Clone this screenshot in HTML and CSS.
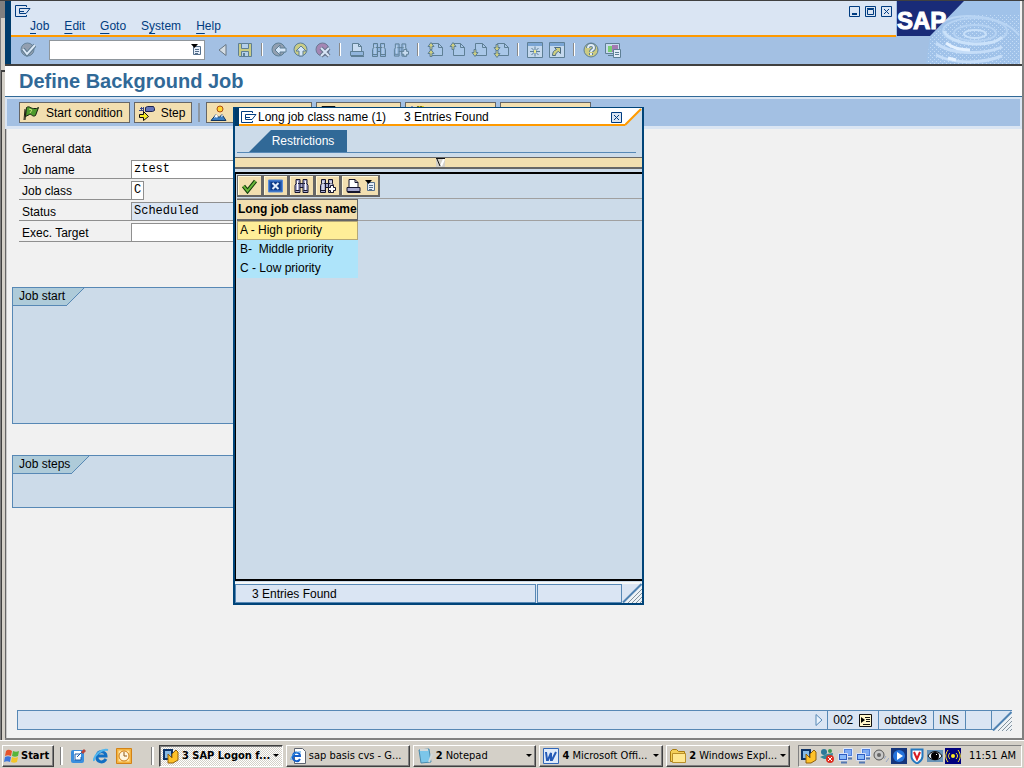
FILE: index.html
```html
<!DOCTYPE html>
<html lang="en">
<head>
    <meta charset="UTF-8">
    <meta name="viewport" content="width=device-width, initial-scale=1.0">
    <title>Define Background Job</title>
    <link rel="stylesheet" href="styles.css">
</head>
<body>
    <svg class="sprite" aria-hidden="true">
        <defs>
            <pattern id="dots" width="4" height="4" patternUnits="userSpaceOnUse">
                <path d="M0 0h1v1H0zM2 2h1v1H2z" fill="#c4dcf6"/>
            </pattern>
        </defs>
        <symbol id="exit" viewBox="0 0 16 12"><path d="M11.500 2V.5H.5v11h11V10M4.500 3.500h10.500l-4 5H4.500zM5 6.500h4" fill="none" stroke="#003c80"/></symbol>
        <symbol id="close" viewBox="0 0 11 11"><path d="M.5.5h10v10H.5z" fill="#dae5f3" stroke="#003c80"/><path d="M3 3l5 5M8 3L3 8" stroke="#003c80" fill="none"/></symbol>
        <symbol id="enter" viewBox="0 0 16 16"><circle cx="7.500" cy="7.500" r="6.500" fill="#929fb0" stroke="#67849b"/><path d="M3 7l4 5 8-9" fill="none" stroke="#5d7a90" stroke-width="4"/><path d="M3 7l4 5 8-9" fill="none" stroke="#dbe9f7" stroke-width="2"/></symbol>
        <symbol id="list" viewBox="0 0 11 12"><path d="M2.500 2.500h7v8h-7z" fill="#e6eefa" stroke="#55708c"/><path d="M4 5.500h4M4 7.500h4M4 9.500h3" stroke="#55708c"/><path d="M0 0h7L3.500 4z"/></symbol>
        <symbol id="save" viewBox="0 0 16 16"><path d="M1.500 1.500h13v13h-12l-1-1z" fill="#c9cc86" stroke="#5e7f95"/><path d="M4.500 1.500h7v5h-7zM4.500 9.500h7v5h-7z" fill="#b5d0ec" stroke="#5e7f95"/><path d="M6 11h2v3H6z" fill="#5e7f95"/></symbol>
        <symbol id="back" viewBox="0 0 16 16"><circle cx="7.500" cy="7.500" r="6.500" fill="#929fb0" stroke="#5e7f95"/><path d="M4 8l5-5v3h6v4H9v3z" fill="#d5e6f8" stroke="#5e7f95"/></symbol>
        <symbol id="up" viewBox="0 0 16 16"><circle cx="7.500" cy="7.500" r="6.500" fill="#c9cc86" stroke="#5e7f95"/><path d="M8 4l5 5h-3v5H6V9H3z" fill="#d5e6f8" stroke="#5e7f95"/></symbol>
        <symbol id="cancel" viewBox="0 0 16 16"><circle cx="7.500" cy="7.500" r="6.500" fill="#a486b4" stroke="#6d7893"/><path d="M6 6l8 8M14 6l-8 8" stroke="#66758d" stroke-width="4"/><path d="M6 6l8 8M14 6l-8 8" stroke="#d9e6f7" stroke-width="2"/></symbol>
        <symbol id="print" viewBox="0 0 16 16"><path d="M3.500 9.500v-8h6l3 3v5z" fill="var(--paper)" stroke="currentColor"/><path d="M9.500 1.500v3h3" fill="none" stroke="currentColor"/><path d="M1.500 9.500h13v4h-13z" fill="var(--fill)" stroke="currentColor"/><path d="M2 14.500h13" stroke="currentColor"/></symbol>
        <symbol id="find" viewBox="0 0 16 16"><path d="M2.500 1.500h4v4h3v-4h4v4l1 2v7h-5v-5h-3v5h-5v-7l1-2z" fill="var(--fill)" stroke="currentColor"/><path d="M6.500 5v5M9.500 5v5M3 5.500h3M10 5.500h3M2 12.500h4M10 12.500h4" stroke="currentColor"/><path d="M4 3v9M12 3v9" stroke="var(--paper)"/></symbol>
        <symbol id="find-next" viewBox="0 0 17 16"><path d="M2.500 1.500h4v4h3v-4h4v4l1 2v7h-5v-5h-3v5h-5v-7l1-2z" fill="var(--fill)" stroke="currentColor"/><path d="M6.500 5v5M9.500 5v5M3 5.500h3M10 5.500h3M2 12.500h4" stroke="currentColor"/><path d="M4 3v9M12 3v4" stroke="var(--paper)"/><path d="M9.500 9.500h2v-2h3v2h2v3h-2v2h-3v-2h-2z" fill="var(--paper)" stroke="currentColor"/></symbol>
        <symbol id="page" viewBox="0 0 16 16"><path d="M4.500 1.500h7l4 4v8h-11z" fill="#a9c7e8" stroke="#5e7f95"/><path d="M11.500 1.500v4h4" fill="none" stroke="#5e7f95"/></symbol>
        <symbol id="arrow" viewBox="0 0 8 8"><path d="M4 .5l3 4H5v3H3v-3H1z" fill="#cfcf80" stroke="#5e7f95"/></symbol>
        <symbol id="session" viewBox="0 0 16 16"><path d="M.5.5h15v15H.5z" fill="#c5d9ee" stroke="#5e7f95"/><path d="M1 1h14v3H1z" fill="#7aa5d4"/><path d="M8 4.500v10M3 9.500h10M4.500 6l7 7M11.500 6l-7 7" stroke="#5e7f95"/><path d="M7 8h2v3H7z" fill="#ecea8c"/></symbol>
        <symbol id="shortcut" viewBox="0 0 16 16"><path d="M.5.5h15v15H.5z" fill="#c5d9ee" stroke="#5e7f95"/><path d="M1 1h14v3H1z" fill="#7aa5d4"/><path d="M5.500 5.500h6v6l-2-2c-2 1-3 2-3 4h-3c0-3 1-5 4-6z" fill="#cfcf80" stroke="#4e6c80"/></symbol>
        <symbol id="help" viewBox="0 0 16 16"><circle cx="8" cy="8" r="7" fill="#cccb82" stroke="#5e7f95"/><path d="M5 6c0-4 6-4 6 0 0 2-3 2-3 4M8 11v2" fill="none" stroke="#5e7f95" stroke-width="4"/><path d="M5 6c0-4 6-4 6 0 0 2-3 2-3 4M8 11v2" fill="none" stroke="#e3edf7" stroke-width="2"/></symbol>
        <symbol id="layout" viewBox="0 0 16 16"><path d="M.5 1.500h14v10H.5zM3 13.500h6" fill="#c8daee" stroke="#5e7f95"/><path d="M3 4h4v6H3z" fill="#7bcf74"/><path d="M7 3h6v7H7z" fill="#a47ab3"/><path d="M8.500 7.500h7v8h-7z" fill="#e2edf9" stroke="#5e7f95"/><path d="M10 10.500h4M10 12.500h4" stroke="#5e7f95"/></symbol>
        <symbol id="flag" viewBox="0 0 17 16"><path d="M2 4L1 15M3 5L2 15" stroke="#221" fill="none"/><path d="M3.500 2.500c3-2 4 1 7 1h3l2-1-3 8c-3 2-4-2-6-1l-4 2z" fill="#4f9b2c" stroke="#161e10"/><path d="M6 4l3 1-2 3" fill="none" stroke="#c8e07a"/></symbol>
        <symbol id="step" viewBox="0 0 17 16"><path d="M7.500 2.500l2-1h6l1 2v2l-2 1h-7z" fill="#6474b8" stroke="#1c2450"/><path d="M3.500 2v4M5.500 2v5M2 3.500h3M1 5.500h4" stroke="#394787"/><path d="M1.500 9.500h4v-3l5 5-5 4v-3h-4z" fill="#f7ec25" stroke="#111"/></symbol>
        <symbol id="overview" viewBox="0 0 16 16"><circle cx="9.500" cy="4" r="3" fill="#ffd832" stroke="#b04a10"/><path d="M.5 15.500l5-6 3 3 3-3 4 6z" fill="#3a7fc4" stroke="#103560"/><path d="M5.500 9l-2 4 2-1 1 1 1-2zM11.500 9l-1 3 2-1z" fill="#fff"/></symbol>
        <symbol id="ok" viewBox="0 0 16 16"><path d="M2 8l4 5 8-10" fill="none" stroke="#123d0b" stroke-width="4"/><path d="M2 8l4 5 8-10" fill="none" stroke="#69b73b" stroke-width="2"/></symbol>
        <symbol id="no" viewBox="0 0 16 16"><path d="M1 2h14v12H1z" fill="#2b62b8" stroke="#5b8ed8"/><path d="M3 4h10v8H3z" fill="#0c3a86"/><path d="M5 5l6 6M11 5l-6 6" stroke="#e4eefb" stroke-width="2"/></symbol>
        <symbol id="grip" viewBox="0 0 20 20"><path d="M0 20L20 0v20z" fill="#edf2f6"/><path d="M1 19.500L19.500 1" stroke="#4f82b2" stroke-width="2"/><path d="M6 20L20 6M10 20L20 10M14 20l6-6M18 20l2-2" stroke="#83929d"/></symbol>
        <symbol id="sap-logon" viewBox="0 0 16 16"><path d="M0 1h10v11H0z" fill="#0c3367"/><path d="M2 3h6v7H2z" fill="#88bae5"/><path d="M5 6l4 4V6l4-4 2 2v8l-5 3H5z" fill="#ffc229" stroke="#90600a"/></symbol>
        <symbol id="ie" viewBox="0 0 16 16"><path d="M13 11c-3 5-10 3-9-3s9-5 9 0H4" fill="none" stroke="#126fc3" stroke-width="3"/><path d="M1 13C0 8 9 0 15 2" fill="none" stroke="#52b6ee" stroke-width="2"/></symbol>
        <symbol id="ie-page" viewBox="0 0 16 16"><path d="M4.500.5h8l3 3v12h-11z" fill="#fff" stroke="#5e6470"/><path d="M10 11c-2 4-8 2-7-3s7-4 7 0H3" fill="none" stroke="#135fcb" stroke-width="2"/><path d="M1 12C0 8 7 3 11 4" fill="none" stroke="#45a2e8"/></symbol>
        <symbol id="network" viewBox="0 0 16 16"><path d="M6.500.5h9v8h-9z" fill="#4f7fdc" stroke="#dfe9fb"/><path d="M8 2h6v5H8z" fill="#7fabf3"/><path d="M1.500 5.500h9v7h-9z" fill="#2f5dc0" stroke="#d8e3fa"/><path d="M3 7h6v4H3z" fill="#8abafa"/><path d="M4 14.500h6M11 10.500h4" stroke="#5579b3" stroke-width="2"/></symbol>
    </svg>

    <div class="desktop">
        <div class="behind" aria-hidden="true"></div>
        <div class="window">
            <header class="header">
                <div class="menubar">
                    <svg class="exit-icon"><use href="#exit"/></svg>
                    <nav class="menu">
                        <a href="#"><u>J</u>ob</a>
                        <a href="#"><u>E</u>dit</a>
                        <a href="#"><u>G</u>oto</a>
                        <a href="#">S<u>y</u>stem</a>
                        <a href="#"><u>H</u>elp</a>
                    </nav>
                    <div class="window-buttons">
                        <button type="button" aria-label="Minimize"><svg viewBox="0 0 11 11"><path d="M.5.5h10v10H.5z" fill="#dae5f3" stroke="#003c80"/><path d="M3 7h5v2H3z" fill="#003c80"/></svg></button>
                        <button type="button" aria-label="Maximize"><svg viewBox="0 0 11 11"><path d="M.5.5h10v10H.5z" fill="#dae5f3" stroke="#003c80"/><path d="M2.500 3.500h6v5h-6zM2 2.500h7" fill="none" stroke="#003c80"/></svg></button>
                        <button type="button" aria-label="Close"><svg><use href="#close"/></svg></button>
                    </div>
                </div>
                <div class="toolbar">
                    <button type="button" class="icon enter" aria-label="Enter"><svg><use href="#enter"/></svg></button>
                    <div class="command">
                        <input type="text" aria-label="Command">
                        <button type="button" aria-label="Command history"><svg><use href="#list"/></svg></button>
                    </div>
                    <button type="button" class="icon narrow" aria-label="Hide command field"><svg viewBox="0 0 9 12"><path d="M8 .5v11L1 6z" fill="#d5dde3" stroke="#667582"/></svg></button>
                    <button type="button" class="icon" aria-label="Save"><svg><use href="#save"/></svg></button>
                    <span class="sep"></span>
                    <button type="button" class="icon" aria-label="Back"><svg><use href="#back"/></svg></button>
                    <button type="button" class="icon" aria-label="Exit"><svg><use href="#up"/></svg></button>
                    <button type="button" class="icon" aria-label="Cancel"><svg><use href="#cancel"/></svg></button>
                    <span class="sep"></span>
                    <button type="button" class="icon" aria-label="Print"><svg><use href="#print"/></svg></button>
                    <button type="button" class="icon" aria-label="Find"><svg><use href="#find"/></svg></button>
                    <button type="button" class="icon" aria-label="Find next"><svg><use href="#find-next"/></svg></button>
                    <span class="sep"></span>
                    <button type="button" class="icon" aria-label="First page"><svg viewBox="0 0 16 16"><use href="#page" width="16" height="16"/><use href="#arrow" width="8" height="8"/><use href="#arrow" y="7" width="8" height="8"/></svg></button>
                    <button type="button" class="icon" aria-label="Previous page"><svg viewBox="0 0 16 16"><use href="#page" width="16" height="16"/><use href="#arrow" width="8" height="8"/></svg></button>
                    <button type="button" class="icon" aria-label="Next page"><svg viewBox="0 0 16 16"><use href="#page" width="16" height="16"/><use href="#arrow" width="8" height="8" transform="translate(0 15) scale(1 -1)"/></svg></button>
                    <button type="button" class="icon" aria-label="Last page"><svg viewBox="0 0 16 16"><use href="#page" width="16" height="16"/><use href="#arrow" width="8" height="8" transform="translate(0 10) scale(1 -1)"/><use href="#arrow" width="8" height="8" transform="translate(0 16) scale(1 -1)"/></svg></button>
                    <span class="sep"></span>
                    <button type="button" class="icon" aria-label="New session"><svg><use href="#session"/></svg></button>
                    <button type="button" class="icon" aria-label="Create shortcut"><svg><use href="#shortcut"/></svg></button>
                    <span class="sep"></span>
                    <button type="button" class="icon" aria-label="Help"><svg><use href="#help"/></svg></button>
                    <button type="button" class="icon" aria-label="Customize layout"><svg><use href="#layout"/></svg></button>
                </div>
                <svg class="banner" viewBox="0 0 124 63">
                    <path d="M68 0h56v63H30l4-28z" fill="#a0c2e9"/>
                    <path d="M68 14h56v49H31l3-28z" fill="url(#dots)"/>
                    <g fill="none">
                        <ellipse cx="79" cy="33" rx="11" ry="4" stroke="#c8e0f9" stroke-width="2"/>
                        <ellipse cx="79" cy="32" rx="21" ry="8" stroke="#b6d3f3" stroke-width="2"/>
                        <ellipse cx="79" cy="30" rx="32" ry="13" stroke="#b6d3f3" stroke-width="2"/>
                        <path d="M48 30c6 14 46 18 58 6" stroke="#cbe2fa" stroke-width="3"/>
                        <path d="M40 42c14 12 48 12 66 4" stroke="#c5ddf8" stroke-width="3"/>
                        <path d="M45 22c19-13 62-7 78 12" stroke="#b9d5f4" stroke-width="2"/>
                        <path d="M40 54c18 9 45 9 66 1" stroke="#c5ddf8" stroke-width="3"/>
                        <path d="M50 42c8 6 16 7 24 7M52 57l8 2" stroke="#e4f1ff" stroke-width="3"/>
                    </g>
                    <path d="M1 0h67L34 35H1z" fill="#192b78"/>
                    <text class="logo-text" x="1" y="28">SAP</text>
                </svg>
            </header>

            <h1>Define Background Job</h1>

            <div class="app-toolbar">
                <button type="button"><svg><use href="#flag"/></svg>Start condition</button>
                <button type="button"><svg><use href="#step"/></svg>Step</button>
                <span class="app-sep"></span>
                <button type="button" class="w-selection" aria-label="Job selection"><svg><use href="#overview"/></svg></button>
                <button type="button" class="w-own" aria-label="Own jobs"><svg viewBox="0 0 16 16"><path d="M1.500 1.500h13v13h-13z" fill="#fff" stroke="#111"/></svg></button>
                <button type="button" class="w-wizard" aria-label="Job wizard"><svg viewBox="0 0 16 16"><path d="M1 3l2-2M3 4l2-2" stroke="#1c48b8"/><path d="M6 3l2-2h6l2 3v10H6z" fill="#dcc916"/><path d="M8.500 1v4M11.500 1v4" stroke="#111"/></svg></button>
                <button type="button" class="w-standard" aria-label="Standard job"></button>
            </div>

            <main class="content">
                <form class="general">
                    <h2>General data</h2>
                    <div class="row"><label for="jobName">Job name</label><input type="text" id="jobName" value="ztest"></div>
                    <div class="row"><label for="jobClass">Job class</label><input type="text" id="jobClass" class="one-char" value="C"></div>
                    <div class="row"><label for="status">Status</label><input type="text" id="status" class="readonly" value="Scheduled" readonly></div>
                    <div class="row"><label for="target">Exec. Target</label><input type="text" id="target"></div>
                </form>
                <section class="group job-start">
                    <h2>Job start</h2>
                    <svg viewBox="0 0 18 17"><path d="M0 0h17.500L.5 17H0z" fill="#aecbd9"/><path d="M17 0L0 17" stroke="#5788b5"/></svg>
                </section>
                <section class="group job-steps">
                    <h2>Job steps</h2>
                    <svg viewBox="0 0 18 17"><path d="M0 0h17.500L.5 17H0z" fill="#aecbd9"/><path d="M17 0L0 17" stroke="#5788b5"/></svg>
                </section>
            </main>

            <footer class="status">
                <span class="message"><svg viewBox="0 0 8 12"><path d="M1 .5v11L7 6z" fill="#e9f3fd" stroke="#5788b5"/></svg></span>
                <span>002<svg class="server-icon" viewBox="0 0 13 13"><path d="M.5.5h12v12H.5z" fill="#fff6ca" stroke="#111"/><path d="M2 3l4 3-4 3z"/><path d="M6 3.500h5M7 5.500h4M7 7.500h4M4 10.500h7" stroke="#111"/></svg></span>
                <span>obtdev3</span>
                <span>INS</span>
                <span class="blank"></span>
                <svg class="grip"><use href="#grip"/></svg>
            </footer>
        </div>

        <div class="popup" role="dialog" aria-labelledby="popupTitle">
            <div class="popup-head">
                <svg class="exit-icon"><use href="#exit"/></svg>
                <span id="popupTitle">Long job class name (1)</span>
                <span class="count">3 Entries Found</span>
                <button type="button" aria-label="Close list"><svg><use href="#close"/></svg></button>
                <svg class="corner" viewBox="0 0 17 18"><path d="M0 0h17L0 17z" fill="#fff"/><path d="M0 17L16 1" stroke="#ff9a00" stroke-width="2"/></svg>
            </div>
            <div class="tabs"><button type="button">Restrictions</button></div>
            <button type="button" class="splitter" aria-label="Expand restrictions"><svg viewBox="0 0 9 9"><path d="M0 0h9v9H0z" fill="#d4d0c8"/><path d="M8 1L5 8" stroke="#fff" stroke-width="2"/><path d="M0 .5h9M1 1l3 7" stroke="#111" fill="none"/></svg></button>
            <div class="hits">
                <div class="hit-tools">
                    <button type="button" aria-label="Copy"><svg><use href="#ok"/></svg></button>
                    <button type="button" aria-label="Cancel list"><svg><use href="#no"/></svg></button>
                    <button type="button" aria-label="Search"><svg><use href="#find"/></svg></button>
                    <button type="button" aria-label="Search next"><svg><use href="#find-next"/></svg></button>
                    <button type="button" class="print" aria-label="Print list"><svg><use href="#print"/></svg><svg class="small"><use href="#list"/></svg></button>
                </div>
                <table>
                    <thead>
                        <tr><th>Long job class name</th><td></td></tr>
                    </thead>
                    <tbody>
                        <tr class="selected"><td>A - High priority</td></tr>
                        <tr><td>B-&nbsp; Middle priority</td></tr>
                        <tr><td>C - Low priority</td></tr>
                    </tbody>
                </table>
            </div>
            <div class="popup-status">
                <span class="found">3 Entries Found</span>
                <span class="blank"></span>
                <svg class="grip"><use href="#grip"/></svg>
            </div>
        </div>
    </div>

    <div class="taskbar">
        <button type="button" class="start">
            <svg viewBox="0 0 16 16"><path d="M2 3c2-2 4-1 6 0L7 8C5 7 3 7 1 8z" fill="#e6532b"/><path d="M9 3c2 1 4 1 6 0l-1 5c-2 1-4 1-6 0z" fill="#58b53b"/><path d="M1 9c2-1 4-1 6 0l-1 5c-2-1-4-1-6 0z" fill="#3d75dc"/><path d="M8 9c2 1 4 1 6 0l-1 5c-2 1-4 1-6 0z" fill="#f4c528"/></svg>Start
        </button>
        <div class="quick">
            <button type="button" aria-label="Show desktop"><svg viewBox="0 0 16 16"><rect x="1" y="2" width="13" height="13" rx="2" fill="#3a8ede"/><path d="M4 3h7v9H4z" fill="#fff"/><path d="M10 6H5v6h6V9M7 9l6-6" fill="none" stroke="#1d5ba8"/><path d="M11 4l3-3 2 2-3 3z" fill="#b8443a"/></svg></button>
            <button type="button" aria-label="Internet Explorer"><svg><use href="#ie"/></svg></button>
            <button type="button" aria-label="Outlook"><svg viewBox="0 0 16 16"><path d="M.5.5h15v15H.5z" fill="#f4b33f" stroke="#d28216"/><path d="M2.500 2.500h11v11h-11z" fill="#ffe3a1"/><circle cx="8" cy="8" r="5" fill="#fff6e0" stroke="#cb7a13"/><path d="M8 4v4h3" fill="none" stroke="#8f5b19"/></svg></button>
        </div>
        <div class="tasks">
            <button type="button" class="pressed arrow"><svg><use href="#sap-logon"/></svg><span><b>3 SAP Logon f...</b></span></button>
            <button type="button"><svg><use href="#ie-page"/></svg><span>sap basis cvs - G...</span></button>
            <button type="button" class="arrow"><svg viewBox="0 0 16 16"><path d="M2 2l10-1 2 13-10 1z" fill="#7cc6e9" stroke="#4a8bad"/><path d="M3 2h8M12 14l3-8" stroke="#d2d9db" stroke-width="2"/></svg><span><b>2</b> Notepad</span></button>
            <button type="button" class="arrow"><svg viewBox="0 0 16 16"><path d="M.5.5h15v15H.5z" fill="#dfeafa" stroke="#3266b7"/><path d="M3 4l1 8h1l3-7v7h1l4-8" fill="none" stroke="#2459b6" stroke-width="2"/></svg><span><b>4</b> Microsoft Offi...</span></button>
            <button type="button" class="arrow"><svg viewBox="0 0 16 16"><path d="M.5 13.500v-10l2-2h4l2 2h6v10z" fill="#f4cf59" stroke="#a87c13"/><path d="M2.500 14.500v-9h13v9z" fill="#ffe790" stroke="#b98f29"/></svg><span><b>2</b> Windows Expl...</span></button>
        </div>
        <div class="tray">
            <svg><use href="#sap-logon"/></svg>
            <svg viewBox="0 0 16 16"><circle cx="5" cy="4" r="3" fill="#2c7799"/><circle cx="11" cy="3" r="2" fill="#3b9753"/><path d="M1 9l7-3 6-1-1 6H5z" fill="#35889b"/><circle cx="11" cy="11" r="4" fill="#de2d20"/><path d="M9 9l4 4M13 9l-4 4" stroke="#fff"/></svg>
            <svg><use href="#network"/></svg>
            <svg><use href="#network"/></svg>
            <svg viewBox="0 0 16 16"><circle cx="6" cy="7" r="5" fill="#c8c8c8" stroke="#555"/><circle cx="6" cy="7" r="2" fill="#666"/><path d="M11 11l2-3M13 14l3-4" stroke="#96a6c6"/></svg>
            <svg viewBox="0 0 16 16"><path d="M0 0h16v16H0z" fill="#15357b"/><circle cx="8" cy="8" r="6" fill="#2674dc"/><path d="M6 4l6 4-6 4z" fill="#fff"/></svg>
            <svg viewBox="0 0 16 16"><path d="M2.500 1.500h11v7c0 4-3 5-5.500 7-3-2-5.500-3-5.500-7z" fill="#fff" stroke="#2477be" stroke-width="2"/><path d="M5 4l3 7 3-7" fill="none" stroke="#d71d23" stroke-width="2"/></svg>
            <svg viewBox="0 0 16 16"><path d="M0 2h16v12H0z" fill="#6793b7"/><path d="M1 8c3-6 11-6 14 0-3 5-11 5-14 0z" fill="#e5eef4" stroke="#111"/><circle cx="8" cy="8" r="4"/><path d="M9 6h1v1H9z" fill="#fff"/></svg>
            <svg viewBox="0 0 16 16"><path d="M0 0h16v16H0z" fill="#00007d"/><path d="M5 5c-2 2-2 4 0 6M11 5c2 2 2 4 0 6M3 2c-3 4-3 8 0 12M13 2c3 4 3 8 0 12" fill="none" stroke="#ffec20"/><circle cx="8" cy="8" r="2" fill="#ffec20"/></svg>
            <time>11:51 AM</time>
        </div>
    </div>
</body>
</html>
```

FILE: styles.css
```css
* {
    box-sizing: border-box;
}
body {
    margin: 0;
    min-height: 100vh;
    display: flex;
    flex-direction: column;
    font-family: "Liberation Sans", Arial, sans-serif;
    font-size: 12px;
    line-height: 16px;
    color: #000;
    background-color: #d4d0c8;
}
button, input {
    margin: 0;
    padding: 0;
    border: 0;
    border-radius: 0;
    font: inherit;
    color: inherit;
    background: none;
}
svg {
    display: block;
    flex: none;
}
h1, h2 {
    margin: 0;
}
.sprite {
    position: absolute;
    width: 0;
    height: 0;
}
.desktop {
    position: relative;
    flex: 1;
    display: flex;
    border-top: 1px solid #404040;
}
.behind {
    width: 5px;
    border-left: 1px solid #808080;
    background: linear-gradient(#808080 17px, #d4d0c8 17px, #d4d0c8 69px, #404040 69px, #404040 71px, transparent 71px),
        linear-gradient(90deg, #404040 1px, #d4d0c8 1px);
}
.window {
    flex: 1;
    display: flex;
    flex-direction: column;
    border-right: 2px solid #808080;
    border-bottom: 2px solid #808080;
    background-color: #f1f1f1;
    box-shadow: inset 1px 0 #666, inset 2px 0 #c8c8c8;
}

/* menu and system toolbar */
.header {
    display: grid;
    grid-template-columns: 1fr 124px;
    grid-template-rows: 36px 27px;
    margin-right: 2px;
    border-left: 6px solid #003c6b;
    background-color: #a3c0e3;
}
.menubar {
    display: grid;
    grid-template-columns: 1fr auto;
    padding: 4px 4px 0 4px;
    border-bottom: 2px solid #ff9a00;
    background-color: #dae5f3;
    color: #003c80;
}
.exit-icon {
    width: 16px;
    height: 12px;
}
.menu {
    grid-row: 2;
    display: flex;
    gap: 15px;
    padding-left: 15px;
}
.menu a {
    color: inherit;
    text-decoration: none;
}
.menu u {
    text-underline-offset: 3px;
}
.window-buttons {
    grid-column: 2;
    grid-row: 1 / 3;
    display: flex;
    align-items: flex-start;
    gap: 5px;
    padding-top: 1px;
}
.window-buttons svg {
    width: 11px;
    height: 11px;
}
.banner {
    grid-column: 2;
    grid-row: 1 / 3;
    width: 124px;
    height: 63px;
}
.logo-text {
    font-size: 24px;
    font-weight: bold;
    fill: #fff;
    stroke: #fff;
    stroke-width: 1px;
}
.toolbar {
    grid-column: 1;
    display: flex;
    align-items: center;
    gap: 6px;
    padding: 0 0 2px 9px;
    --fill: #91b5dd;
    --paper: #c8dcf1;
    color: #5e7f95;
}
.icon svg {
    width: 16px;
    height: 16px;
}
.icon.narrow svg {
    width: 9px;
    height: 12px;
}
.enter {
    margin-right: 7px;
}
.command {
    display: flex;
    align-items: center;
    width: 156px;
    height: 20px;
    margin-right: 7px;
    border: 1px solid #8f969c;
    background-color: #fff;
}
.command input {
    flex: 1;
    min-width: 0;
    height: 18px;
    padding: 0 3px;
}
.command svg {
    width: 11px;
    height: 12px;
    margin-right: 2px;
}
.narrow {
    margin-right: 4px;
}
.sep {
    width: 2px;
    height: 13px;
    margin: 0 2px;
    border-left: 1px solid #8a8a8a;
    background-color: #fff;
}

h1 {
    height: 33px;
    padding-left: 14px;
    border-top: 2px solid #404040;
    border-bottom: 1px solid #316997;
    font-size: 20px;
    line-height: 30px;
    color: #316997;
    background-color: #fff;
}
.app-toolbar {
    display: flex;
    align-items: center;
    gap: 4px;
    height: 32px;
    padding: 0 12px;
    border: 2px solid #dae5f3;
    border-bottom-width: 3px;
    background-color: #a3c0e3;
}
.app-toolbar button {
    display: flex;
    align-items: center;
    gap: 6px;
    height: 21px;
    padding: 0 6px 0 3px;
    border: 1px solid #666;
    background-color: #f2dfb0;
}
.app-toolbar svg {
    width: 17px;
    height: 16px;
}
.app-sep {
    width: 2px;
    height: 19px;
    margin: 0 2px;
    background-color: #8c97a3;
}
.w-selection {
    width: 106px;
}
.w-own {
    width: 85px;
}
.w-wizard, .w-standard {
    width: 91px;
}

/* job form */
.content {
    flex: 1;
    padding: 11px 7px;
}
.content h2 {
    font-size: 12px;
    font-weight: normal;
}
.general {
    width: 50%;
    margin-left: 7px;
}
.general h2 {
    padding-left: 3px;
    line-height: 18px;
}
.row {
    display: flex;
    align-items: flex-end;
    height: 21px;
}
.row label {
    width: 112px;
    height: 18px;
    padding-left: 3px;
    border-bottom: 1px solid #8f8f8f;
    line-height: 18px;
}
.row input {
    flex: 1;
    height: 19px;
    padding: 0 2px 2px;
    border: 1px solid #8f8f8f;
    font-family: "Liberation Mono", "Courier New", monospace;
    background-color: #fff;
}
.row .one-char {
    flex: none;
    width: 13px;
    padding-right: 0;
}
.row .readonly {
    background-color: #dae5f3;
}
.group {
    display: flex;
    align-items: flex-start;
    width: 60%;
    border: 1px solid #5788b5;
    background-color: #ccdbe9;
}
.group h2 {
    height: 18px;
    padding: 0 2px 0 6px;
    border-bottom: 1px solid #5788b5;
    background-color: #aecbd9;
}
.group svg {
    width: 18px;
    height: 17px;
}
.job-start {
    height: 137px;
    margin-top: 45px;
}
.job-steps {
    height: 53px;
    margin-top: 31px;
}
.status {
    display: flex;
    height: 20px;
    margin: 0 10px 8px 12px;
    border: 1px solid #5788b5;
    border-right: 0;
    line-height: 19px;
    background-color: #dae5f3;
}
.status span {
    display: flex;
    align-items: center;
    gap: 6px;
    padding: 0 6px 0 5px;
    border-right: 1px solid #5788b5;
}
.status .message {
    flex: 1;
    justify-content: flex-end;
    padding-right: 4px;
}
.message svg {
    width: 8px;
    height: 12px;
}
.server-icon {
    width: 13px;
    height: 13px;
}
.status .blank {
    width: 26px;
}
.grip {
    width: 20px;
    height: 20px;
}

/* value list window */
.popup {
    position: absolute;
    left: 233px;
    top: 106px;
    width: 411px;
    height: 498px;
    display: flex;
    flex-direction: column;
    border: 2px solid #004479;
    border-top-width: 1px;
    background-color: #ccdbe9;
}
.popup-head {
    display: flex;
    align-items: center;
    height: 18px;
    padding-left: 2px;
    border-left: 4px solid #003c6b;
    background: linear-gradient(#ff9a00, #ff9a00) 0 100% / calc(100% - 17px) 2px no-repeat,
        linear-gradient(#fff, #fff) 0 0 / calc(100% - 17px) 100% no-repeat;
}
.popup-head span {
    padding-left: 1px;
}
.popup-head .count {
    flex: 1;
    padding-left: 18px;
}
.popup-head button svg {
    width: 11px;
    height: 11px;
    margin-right: 3px;
}
.corner {
    width: 17px;
    height: 18px;
}
.tabs {
    height: 27px;
    margin: 0 6px 0 2px;
    padding: 4px 0 0 12px;
    border-bottom: 1px solid #5788b5;
}
.tabs button {
    display: block;
    width: 98px;
    height: 22px;
    padding-left: 10px;
    color: #fff;
    background-color: #316997;
    clip-path: polygon(22px 0, 100% 0, 100% 100%, 0 100%);
}
.splitter {
    display: flex;
    justify-content: center;
    height: 12px;
    margin-top: 4px;
    padding-left: 4px;
    border-top: 1px solid #666;
    border-bottom: 2px solid #666;
    background-color: #f2dfb0;
}
.splitter svg {
    width: 9px;
    height: 9px;
}
.hits {
    flex: 1;
    margin-top: 3px;
    padding-left: 1px;
    border: 1px solid #000;
    border-width: 2px 0 2px 1px;
}
.hit-tools {
    display: flex;
    height: 25px;
    padding-top: 1px;
    border-bottom: 1px solid #a0a0a0;
    --fill: #a7a9d0;
    --paper: #fff;
    color: #15152d;
}
.hit-tools button {
    display: flex;
    align-items: center;
    justify-content: center;
    width: 26px;
    height: 22px;
    border: 2px solid #666;
    border-width: 1px 2px 2px 1px;
    background-color: #f2dfb0;
    box-shadow: inset 1px 1px #fff7d6;
}
.hit-tools svg {
    width: 17px;
    height: 16px;
}
.hit-tools .print {
    width: 39px;
    gap: 3px;
}
.hit-tools .small {
    width: 11px;
    height: 12px;
}
.hits table {
    width: 100%;
    border-spacing: 0;
}
.hits th, .hits td {
    height: 19px;
    padding: 0 0 0 3px;
    border: 0;
    line-height: 17px;
    text-align: left;
    white-space: nowrap;
}
.hits thead td {
    width: 100%;
    border-bottom: 1px solid #a0a0a0;
}
.hits thead th {
    height: 22px;
    padding: 0 0 0 1px;
    border: 1px solid #666;
    border-width: 1px 1px 2px 0;
    background-color: #f2dfb0;
}
.hits tbody td {
    background-color: #aee4fa;
}
.hits .selected td {
    padding-left: 2px;
    border: 1px solid #b5a878;
    background-color: #ffee98;
}
.popup-status {
    display: flex;
    align-items: flex-end;
    height: 21px;
    margin-top: 1px;
    border-top: 2px solid #f5f8f8;
    background-color: #dae5f3;
}
.popup-status span {
    height: 19px;
    border: 1px solid #5788b5;
}
.popup-status .found {
    flex: 1;
    margin-right: 1px;
    padding-left: 16px;
    line-height: 18px;
}
.popup-status .blank {
    width: 85px;
}

/* desktop taskbar */
.taskbar {
    display: flex;
    align-items: center;
    height: 28px;
    padding: 3px 2px 1px;
    border-top: 1px solid #fff;
    font-family: "DejaVu Sans Condensed", "Noto Sans", sans-serif;
    font-size: 11px;
    background-color: #d4d0c8;
}
.start, .tasks button {
    display: flex;
    align-items: center;
    gap: 3px;
    height: 22px;
    padding: 0 3px;
    border: 1px solid;
    border-color: #fff #404040 #404040 #fff;
    box-shadow: inset -1px -1px #808080;
}
.start {
    width: 52px;
    padding: 0 1px;
    gap: 1px;
    font-weight: bold;
}
.taskbar svg {
    width: 16px;
    height: 16px;
}
.quick {
    display: flex;
    gap: 7px;
    height: 18px;
    align-items: center;
    width: 93px;
    margin-left: 7px;
    padding-left: 7px;
    border-left: 2px solid #fff;
    border-right: 2px solid #fff;
    box-shadow: -1px 0 #808080, inset -1px 0 #808080;
}
.tasks {
    flex: 1;
    display: flex;
    gap: 3px;
    min-width: 0;
    padding-left: 5px;
}
.tasks button {
    flex: 1;
    min-width: 0;
    white-space: nowrap;
}
.arrow::after {
    content: "";
    margin-left: auto;
    border: 3px solid transparent;
    border-top-color: #000;
    border-bottom: 0;
}
.tasks .pressed {
    border-color: #404040 #fff #fff #404040;
    box-shadow: inset 1px 1px #808080;
    background: repeating-conic-gradient(#fff 0 25%, #d4d0c8 0 50%) 0 0 / 2px 2px;
}
.tray {
    display: flex;
    align-items: center;
    gap: 2px;
    height: 22px;
    margin-left: 8px;
    padding: 0 5px 0 2px;
    border: 1px solid;
    border-color: #808080 #fff #fff #808080;
}
.tray time {
    margin-left: 6px;
    white-space: nowrap;
}
```
